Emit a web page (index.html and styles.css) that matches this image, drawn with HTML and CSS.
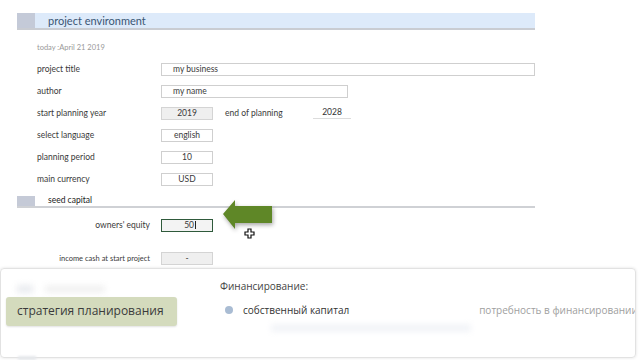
FILE: index.html
```html
<!DOCTYPE html>
<html>
<head>
  <title>Project Environment</title>
  <link rel="stylesheet" href="styles.css">
</head>
<body>
  <div class="sheet">
    <div class="section-bar">
      <div class="section-tab"></div>
      <div class="section-title">project environment</div>
    </div>

    <div class="today">today :April 21 2019</div>

    <div class="row">
      <div class="label">project title</div>
      <div class="cell cell-wide">my business</div>
    </div>
    <div class="row">
      <div class="label">author</div>
      <div class="cell cell-mid">my name</div>
    </div>
    <div class="row">
      <div class="label">start planning year</div>
      <div class="cell cell-small cell-gray center">2019</div>
      <div class="label-inline">end of planning</div>
      <div class="cell-plain">2028</div>
    </div>
    <div class="row">
      <div class="label">select language</div>
      <div class="cell cell-small center">english</div>
    </div>
    <div class="row">
      <div class="label">planning period</div>
      <div class="cell cell-small center">10</div>
    </div>
    <div class="row">
      <div class="label">main currency</div>
      <div class="cell cell-small center">USD</div>
    </div>

    <div class="sub-bar">
      <div class="sub-tab"></div>
      <div class="sub-title">seed capital</div>
    </div>

    <div class="row row-equity">
      <div class="label label-right">owners' equity</div>
      <div class="cell cell-small cell-active">50<span class="caret"></span></div>
    </div>
    <div class="row row-income">
      <div class="label label-right label-tiny">income cash at start project</div>
      <div class="cell cell-small cell-gray center">-</div>
    </div>

    <!-- pointer arrow over the sheet -->
    <svg class="arrow" width="52" height="32" viewBox="0 0 52 32">
      <polygon points="1,15 13,1 13,7 50,7 50,24 13,24 13,30" fill="#5f8727"/>
    </svg>
    <svg class="cursor" width="11" height="11" viewBox="0 0 11 11">
      <path d="M4 1h3v3h3v3h-3v3h-3v-3h-3v-3h3z" fill="#fff" stroke="#111" stroke-width="1.2"/>
    </svg>
  </div>

  <div class="overlay">
    <div class="ghost ghost-a"></div>
    <div class="ghost ghost-b"></div>
    <div class="ghost ghost-c"></div>
    <div class="strategy">стратегия планирования</div>
    <div class="funding">
      <div class="funding-title">Финансирование:</div>
      <div class="funding-row">
        <span class="dot"></span>
        <span class="funding-item">собственный капитал</span>
        <span class="funding-need">потребность в финансировании</span>
      </div>
    </div>
  </div>
  <div class="below-ghost"></div>
</body>
</html>
```

FILE: styles.css
```css
body {
  margin: 0;
  padding: 0;
  background-color: #fff;
  font-family: Lato, "Open Sans", sans-serif;
  color: #333;
  width: 640px;
  height: 360px;
  overflow: hidden;
  position: relative;
}

.sheet {
  position: relative;
  margin-left: 17px;
  padding-top: 13px;
  width: 518px;
}

.section-bar {
  display: flex;
  height: 15px;
  border-bottom: 2px solid #c9ccd2;
  background-color: #ddeafa;
}

.section-tab {
  width: 18px;
  background-color: #c4cad8;
}

.section-title {
  margin-left: 13px;
  font-size: 11px;
  line-height: 15px;
  color: #3a5674;
}

.today {
  margin-top: 13px;
  padding-left: 20px;
  font-size: 7.5px;
  line-height: 10px;
  color: #999;
}

.row {
  display: flex;
  align-items: center;
  height: 22px;
  font-size: 8.5px;
}

.today + .row {
  margin-top: 5px;
}

.label {
  width: 144px;
  padding-left: 20px;
  box-sizing: border-box;
  color: #3a3a3a;
}

.label-right {
  text-align: right;
  padding-right: 11px;
}

.label-tiny {
  font-size: 7.5px;
}

.cell {
  height: 11px;
  line-height: 11px;
  border: 1px solid #cfcfcf;
  background-color: #fff;
  padding: 0 11px;
  box-sizing: content-box;
  color: #3a3a3a;
}

.cell-wide {
  width: 350px;
}

.cell-mid {
  width: 163px;
}

.cell-small {
  width: 28px;
}

.center {
  text-align: center;
}

.cell-gray {
  background-color: #efefef;
  border-color: #d4d4d4;
}

.label-inline {
  margin-left: 12px;
  width: 88px;
  color: #3a3a3a;
}

.cell-plain {
  width: 38px;
  height: 11px;
  line-height: 11px;
  text-align: center;
  border-bottom: 1px solid #dcdcdc;
}

.sub-bar {
  display: flex;
  margin-top: 6px;
  height: 10px;
  border-bottom: 2px solid #cfd1d5;
}

.sub-tab {
  width: 18px;
  background-color: #c5cad7;
}

.sub-title {
  margin-left: 13px;
  font-size: 8.5px;
  line-height: 9px;
  color: #222;
}

.row-equity {
  margin-top: 6px;
}

.cell-active {
  border: 1px solid #2f5a3b;
  background-color: #f3f3f3;
  text-align: right;
  padding: 0 16px 0 6px;
  width: 28px;
}

.caret {
  display: inline-block;
  width: 1px;
  height: 8px;
  margin-left: 1px;
  vertical-align: -1px;
  background-color: #222;
}

.row-income {
  margin-top: 11px;
}

.arrow {
  position: absolute;
  left: 205px;
  top: 199px;
  filter: drop-shadow(1px 2px 2px rgba(0, 0, 0, 0.35));
}

.cursor {
  position: absolute;
  left: 227px;
  top: 228px;
}

.overlay {
  position: absolute;
  left: 0;
  top: 268px;
  width: 634px;
  height: 88px;
  background-color: rgba(255, 255, 255, 0.96);
  border: 1px solid #e2e2e2;
  border-radius: 4px;
  box-shadow: 0 0 3px rgba(0, 0, 0, 0.12);
  font-family: "Open Sans", "Noto Sans", sans-serif;
  overflow: hidden;
}

.ghost {
  position: absolute;
  background-color: #e9ebef;
  filter: blur(3px);
}

.ghost-a {
  left: 16px;
  top: 16px;
  width: 16px;
  height: 8px;
}

.ghost-b {
  left: 44px;
  top: 17px;
  width: 60px;
  height: 6px;
  background-color: #eeeeee;
}

.ghost-c {
  left: 270px;
  top: 56px;
  width: 200px;
  height: 6px;
  background-color: #eef1f6;
}

.strategy {
  position: absolute;
  left: 5px;
  top: 28px;
  width: 160px;
  height: 29px;
  padding-left: 11px;
  line-height: 28px;
  font-size: 12px;
  color: #3a3a3a;
  background-color: #d4dbbd;
  border-radius: 3px;
  box-shadow: 0 1px 2px rgba(0, 0, 0, 0.12);
}

.funding {
  position: absolute;
  left: 219px;
  top: 10px;
  width: 420px;
}

.funding-title {
  font-size: 10px;
  line-height: 14px;
  color: #444;
}

.funding-row {
  display: flex;
  align-items: center;
  margin-top: 10px;
  height: 14px;
  font-size: 10px;
  white-space: nowrap;
}

.dot {
  width: 8px;
  height: 8px;
  margin-left: 5px;
  border-radius: 50%;
  background-color: #a9bcd3;
}

.funding-item {
  margin-left: 10px;
  color: #333;
}

.funding-need {
  margin-left: 130px;
  color: #a0a0a0;
}

.below-ghost {
  position: absolute;
  left: 18px;
  top: 356px;
  width: 18px;
  height: 4px;
  background-color: #e6e8ec;
  filter: blur(1px);
}
```
